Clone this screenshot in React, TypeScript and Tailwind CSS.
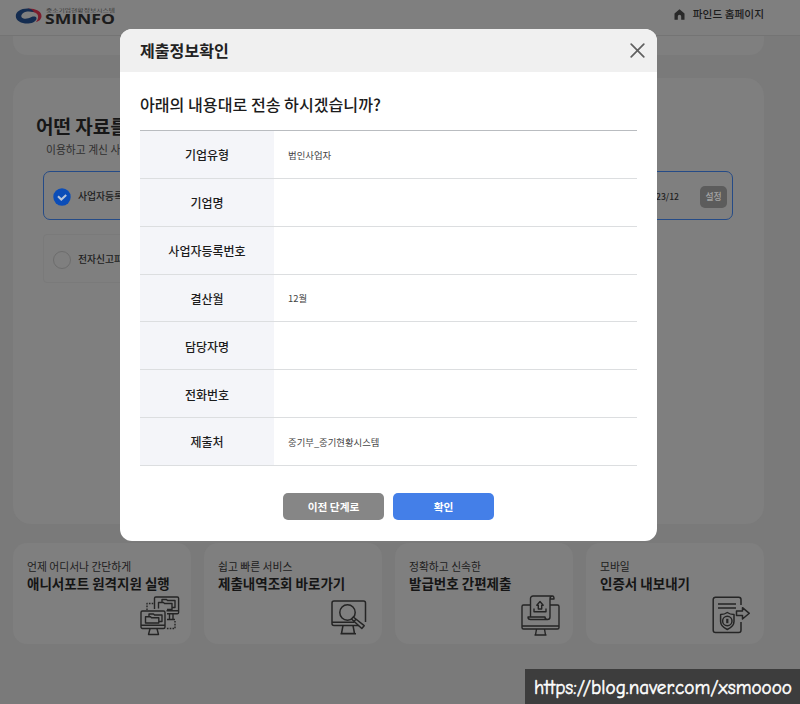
import type { ReactNode } from "react";

interface InfoRow {
  label: string;
  value: string;
}

const rows: InfoRow[] = [
  { label: "기업유형", value: "법인사업자" },
  { label: "기업명", value: "" },
  { label: "사업자등록번호", value: "" },
  { label: "결산월", value: "12월" },
  { label: "담당자명", value: "" },
  { label: "전화번호", value: "" },
  { label: "제출처", value: "중기부_중기현황시스템" },
];

function RemoteIcon() {
  return (
    <svg width="40" height="40" viewBox="0 0 40 40" fill="none" stroke="#252525" strokeWidth="1.4" strokeLinejoin="round">
      <path d="M14.500 13V2.300a1.300 1.300 0 0 1 1.300-1.300h21.500a1.300 1.300 0 0 1 1.300 1.300v14.200a1.300 1.300 0 0 1-1.300 1.300H27M26.500 14.800h12M29.500 18v5M33 18v5M27 23.500h8" />
      <path d="M22 6V3.500h4.500l1 1H35v7h-2.500M18.500 12.500V6.500h5l1 1h7.500v6h-5" />
      <path d="M7 14V7.500h7M35 25v7.500h-9" strokeDasharray="1.600 1.200" />
      <rect x="1" y="15" width="24" height="17.500" rx="1.500" />
      <path d="M1 29.300h24M10 32.800 8.500 38.500h10L17 32.800" />
      <path d="M9 20.500V18h4.500l1 1H22v6.500h-3M5.500 20.800h5l1 1h7.300V27H5.500z" />
    </svg>
  );
}

function SearchIcon() {
  return (
    <svg width="36" height="36" viewBox="0 0 36 36" fill="none" stroke="#252525" strokeWidth="1.5" strokeLinejoin="round">
      <path d="M34.500 22V3a2 2 0 0 0-2-2H3a2 2 0 0 0-2 2v20.500a2 2 0 0 0 2 2h26M1 22.300h22.500" />
      <path d="m12 25.500-1.500 8h13l-1.500-8M9.500 33.800h15.500" />
      <circle cx="16.500" cy="12.500" r="7.700" />
      <path d="m22.300 17 10.900 8.700-2.400 2.800L20.500 19z" fill="#7f7f7f" />
      <path d="m25 19.200-2.200 2.300" />
    </svg>
  );
}

function IssueIcon() {
  return (
    <svg width="40" height="41" viewBox="0 0 40 41" fill="none" stroke="#252525" strokeWidth="1.4" strokeLinejoin="round">
      <path d="M9 10H2.500A1.500 1.500 0 0 0 1 11.500v21A1.500 1.500 0 0 0 2.500 34h34a1.500 1.500 0 0 0 1.500-1.500v-21a1.500 1.500 0 0 0-1.500-1.500H29M1 31h37" />
      <path d="m15.500 34-1 6h10l-1-6M13.500 40h12" />
      <path d="M9.500 22V3.500A2.500 2.500 0 0 1 12 1h19.500C33 1 33 4 33 4h-4v18a2.500 2.500 0 0 1-2.500 2.500h-17S7 24.500 7 22h17c0 2.500 2.500 2.500 2.500 2.500M29 4c0-3 2.500-3 2.500-3" />
      <path d="m19 6.500-3.200 3.700h1.500V14h3.400v-3.800h1.500zM13 13.500v3.200h12v-3.200" />
    </svg>
  );
}

function CertificateIcon() {
  return (
    <svg width="38" height="38" viewBox="0 0 38 38" fill="none" stroke="#252525" strokeWidth="1.5" strokeLinejoin="round">
      <path d="M29 9V3.500a2.300 2.300 0 0 0-2.300-2.300H3.500a2.300 2.300 0 0 0-2.300 2.300v30.700a2.300 2.300 0 0 0 2.300 2.300h23.200a2.300 2.300 0 0 0 2.300-2.300V26" />
      <path d="M6 8h18M6 12h18" strokeWidth="1.700" />
      <path d="M15.300 16.500c2 1.500 4.500 2 6.700 2v7c0 4-3.500 6.500-6.700 8-3.200-1.500-6.700-4-6.700-8v-7c2.200 0 4.700-.5 6.700-2z" />
      <circle cx="15.300" cy="25" r="4.700" />
      <path d="M15.300 22.800v4.400" strokeWidth="2.200" />
      <path d="M24.500 15h6v-3.300l6.800 5.600-6.800 5.700v-3.500h-6z" />
    </svg>
  );
}

interface Shortcut {
  caption: string;
  title: string;
  icon: ReactNode;
  iconClass: string;
}

const shortcuts: Shortcut[] = [
  { caption: "언제 어디서나 간단하게", title: "애니서포트 원격지원 실행", icon: <RemoteIcon />, iconClass: "right-[11px] top-[53px]" },
  { caption: "쉽고 빠른 서비스", title: "제출내역조회 바로가기", icon: <SearchIcon />, iconClass: "right-[15px] top-[57px]" },
  { caption: "정확하고 신속한", title: "발급번호 간편제출", icon: <IssueIcon />, iconClass: "right-[12px] top-[52px]" },
  { caption: "모바일", title: "인증서 내보내기", icon: <CertificateIcon />, iconClass: "right-[14px] top-[53px]" },
];

function SiteHeader() {
  return (
    <header className="flex h-9 items-start justify-between border-b border-[#747474] bg-[#7f7f7f] pl-[15px] pr-9">
      <div className="flex items-start gap-[3px] pt-[7px]">
        <svg className="mt-px" width="27" height="16" viewBox="0 0 27 16">
          <path d="M13 .5C20 .2 26.500 3 26.500 8c0 3.500-3 5.500-5.500 6 2.500-3 3-6.500.5-8.500C19 3.500 15 4.200 13 .5z" fill="#7d1d2d" />
          <path d="M13.500.5C6 .2.800 3.500.800 8c0 5 6 7.800 12.500 7.500 5-.3 8-2.500 8.200-5 .1-2-2.500-2.500-5-1.500-3 1.200-5 2.300-8 1.500-3-.9-3-4 .5-6C12 2.800 16 3.800 19 4 17.500 2 16 .8 13.500.5z" fill="#142c50" />
        </svg>
        <div>
          <svg className="block overflow-visible" width="71" height="6">
            <text x="1" y="5" textLength="69" lengthAdjust="spacingAndGlyphs" className="fill-[#3a3a3a] text-[5px]">중소기업현황정보시스템</text>
          </svg>
          <svg className="block overflow-visible" width="71" height="12">
            <text x="0" y="10.500" textLength="70" lengthAdjust="spacingAndGlyphs" className="fill-[#1c1c1c] font-['Open_Sans'] text-[13.5px] font-bold">SMINFO</text>
          </svg>
        </div>
      </div>
      <div className="flex items-center gap-2 pt-[6px]">
        <svg width="11" height="11" viewBox="0 0 11 11" fill="#292929">
          <path d="M5.500.3.500 4.500v6.200h3.300V7.500a1.700 1.700 0 0 1 3.400 0v3.200h3.300V4.500z" />
        </svg>
        <span className="text-[10.7px] leading-4 font-medium text-[#1c1c1c]">파인드 홈페이지</span>
      </div>
    </header>
  );
}

function ShortcutCard({ caption, title, icon, iconClass }: Shortcut) {
  return (
    <div className="relative h-[101px] rounded-[14px] bg-[#7f7f7f] pl-[14px] pt-4">
      <p className="text-[10.8px] leading-[14px] text-[#202020]">{caption}</p>
      <p className="mt-px text-[13.5px] leading-[19px] font-bold whitespace-nowrap text-[#151515]">{title}</p>
      <span className={`absolute ${iconClass}`}>{icon}</span>
    </div>
  );
}

function ConfirmDialog() {
  return (
    <div className="absolute left-[120px] top-[29px] h-[511.5px] w-[537px] overflow-hidden rounded-[12px] bg-white">
      <div className="flex h-[43px] items-center justify-between bg-[#f0f0f0] pb-px pl-5 pr-3">
        <h2 className="text-[16.1px] font-bold text-[#222222]">제출정보확인</h2>
        <button aria-label="닫기">
          <svg width="15" height="15" viewBox="0 0 15 15" stroke="#606060" strokeWidth="1.7" strokeLinecap="round">
            <path d="m1.200 1.200 12.600 12.600M13.800 1.200 1.200 13.800" />
          </svg>
        </button>
      </div>
      <div className="px-5 pt-5">
        <h3 className="text-[16.1px] leading-6 font-medium text-[#1c1c1c]">아래의 내용대로 전송 하시겠습니까?</h3>
        <div className="mt-[14px] border-t border-[#b9bcc0]">
          {rows.map((row) => (
            <div key={row.label} className="flex h-[47.85px] border-b border-[#dcdee0]">
              <div className="flex w-[134px] items-center justify-center bg-[#f4f5f9] pt-[2px] text-[12px] font-medium text-[#1c1c1c]">
                {row.label}
              </div>
              <div className="flex items-center pt-px pl-[14px] text-[9.4px] text-[#444444]">{row.value}</div>
            </div>
          ))}
        </div>
        <div className="mt-[27px] flex justify-center gap-[9px] text-[10.7px] font-bold text-white">
          <button className="h-[27px] w-[101px] rounded-[5px] bg-[#868686] pt-px">이전 단계로</button>
          <button className="h-[27px] w-[101px] rounded-[5px] bg-[#447fe8] pt-px">확인</button>
        </div>
      </div>
    </div>
  );
}

export default function App() {
  return (
    <div className="relative h-[704px] w-[800px] overflow-hidden bg-[#7a7a7a] font-['Noto_Sans_CJK_KR',sans-serif]">
      <SiteHeader />
      <div className="ml-[13px] w-[751px]">
        <div className="h-[19px] rounded-b-[14px] bg-[#7f7f7f]" />
        <section className="mt-[23px] h-[446px] rounded-[18px] bg-[#7f7f7f] px-[30px] pt-[35px]">
          <h1 className="-ml-[7px] text-[19px] leading-[26px] font-bold text-[#171717]">어떤 자료를</h1>
          <p className="ml-[3px] mt-[3px] text-[10.8px] leading-[14px] text-[#303030]">이용하고 계신 사</p>
          <div className="mt-[15px] flex h-[49px] w-[690px] items-center rounded-[7px] border border-[#254b87] pl-[9px] pr-[5px] pt-[2px] text-[9.8px] font-medium text-[#202020]">
            <svg width="18" height="18" viewBox="0 0 18 18" fill="none">
              <circle cx="9" cy="9" r="8.700" fill="#0b4db8" />
              <path d="m5 8.200 3.300 3.300 4.900-4.500" stroke="#b5c4da" strokeWidth="2" />
            </svg>
            <span className="ml-[7px]">사업자등록</span>
            <span className="ml-auto text-[8.6px]">23/12</span>
            <button className="ml-[21px] h-[22px] w-[27px] rounded-[5px] bg-[#5c5c5c] text-[8.8px] text-[#a5a5a5]">설정</button>
          </div>
          <div className="mt-[14px] flex h-[49px] w-[345px] items-center rounded-[4px] border border-[#7a7a7a] pl-[9px] pt-[2px] text-[9.8px] font-medium text-[#202020]">
            <span className="h-[18px] w-[18px] rounded-full border border-[#6d6d6d]" />
            <span className="ml-[7px]">전자신고파</span>
          </div>
        </section>
        <div className="mt-[19px] grid grid-cols-4 gap-[13px]">
          {shortcuts.map((item) => (
            <ShortcutCard key={item.title} {...item} />
          ))}
        </div>
      </div>
      <ConfirmDialog />
      <div className="absolute bottom-0 right-0 h-[35px] w-[275px] bg-[#3d3d3d]">
        <svg width="275" height="35">
          <text x="9" y="25" textLength="258" lengthAdjust="spacingAndGlyphs" className="fill-white stroke-white stroke-[0.5px] font-['Comic_Neue','Lato',cursive] text-[20px] font-medium">https://blog.naver.com/xsmoooo</text>
        </svg>
      </div>
    </div>
  );
}
